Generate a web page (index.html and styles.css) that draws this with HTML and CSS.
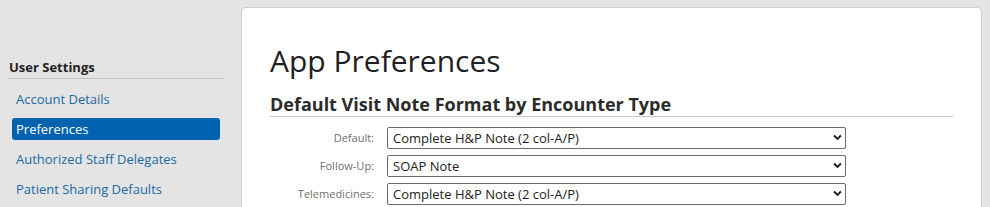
FILE: index.html
```html
<!DOCTYPE html>
<html lang="en">
<head>
    <meta charset="UTF-8">
    <title>App Preferences</title>
    <link rel="stylesheet" href="styles.css">
</head>
<body>
    <div class="layout">
        <aside class="sidebar">
            <h4 class="side-title">User Settings</h4>
            <nav class="side-nav">
                <a href="#" class="side-link">Account Details</a>
                <a href="#" class="side-link active">Preferences</a>
                <a href="#" class="side-link">Authorized Staff Delegates</a>
                <a href="#" class="side-link">Patient Sharing Defaults</a>
            </nav>
        </aside>

        <main class="panel">
            <h1 class="page-title">App Preferences</h1>
            <h2 class="section-title">Default Visit Note Format by Encounter Type</h2>

            <div class="form-row">
                <label for="fmtDefault">Default:</label>
                <div class="select-wrap">
                    <select id="fmtDefault">
                        <option>Complete H&amp;P Note (2 col-A/P)</option>
                        <option>SOAP Note</option>
                    </select>
                    <svg class="chevron" viewBox="0 0 10 7" width="9" height="7"><path d="M1.2 1.2 L5 5 L8.8 1.2" fill="none" stroke="#222" stroke-width="2.2"/></svg>
                </div>
            </div>

            <div class="form-row">
                <label for="fmtFollow">Follow-Up:</label>
                <div class="select-wrap">
                    <select id="fmtFollow">
                        <option>SOAP Note</option>
                        <option>Complete H&amp;P Note (2 col-A/P)</option>
                    </select>
                    <svg class="chevron" viewBox="0 0 10 7" width="9" height="7"><path d="M1.2 1.2 L5 5 L8.8 1.2" fill="none" stroke="#222" stroke-width="2.2"/></svg>
                </div>
            </div>

            <div class="form-row">
                <label for="fmtTele">Telemedicines:</label>
                <div class="select-wrap">
                    <select id="fmtTele">
                        <option>Complete H&amp;P Note (2 col-A/P)</option>
                        <option>SOAP Note</option>
                    </select>
                    <svg class="chevron" viewBox="0 0 10 7" width="9" height="7"><path d="M1.2 1.2 L5 5 L8.8 1.2" fill="none" stroke="#222" stroke-width="2.2"/></svg>
                </div>
            </div>
        </main>
    </div>
</body>
</html>
```

FILE: styles.css
```css
* {
    margin: 0;
    padding: 0;
    box-sizing: border-box;
    font-family: 'Open Sans', 'Noto Sans', sans-serif;
}

html, body {
    height: 207px;
    overflow: hidden;
}

body {
    background: #e4e4e4;
}

.layout {
    display: flex;
    padding: 7px 8px 0 8px;
}

.sidebar {
    width: 216px;
    flex-shrink: 0;
    margin-right: 17px;
    padding-top: 51px;
}

.side-title {
    font-size: 13px;
    font-weight: 700;
    color: #222;
    line-height: 18px;
    padding: 0 0 2px 1px;
    border-bottom: 1px solid #c4c4c4;
    margin-bottom: 9px;
}

.side-nav {
    display: flex;
    flex-direction: column;
    gap: 8px;
    padding: 0 4px;
}

.side-link {
    display: block;
    height: 22px;
    line-height: 22px;
    padding-left: 4px;
    font-size: 13px;
    color: #1b6aa5;
    text-decoration: none;
    border-radius: 3px;
}

.side-link.active {
    background: #0063b0;
    color: white;
}

.panel {
    flex: 1;
    height: 220px;
    background: white;
    border: 1px solid #d0d0d0;
    border-radius: 5px;
    padding: 33px 28px 0 28px;
}

.page-title {
    font-size: 30px;
    font-weight: 400;
    color: #1e2124;
    line-height: 40px;
    margin-bottom: 13px;
}

.section-title {
    font-size: 18px;
    font-weight: 700;
    color: #2b2b2b;
    line-height: 20px;
    padding-bottom: 2px;
    border-bottom: 1px solid #c8c8c8;
    margin-bottom: 9px;
}

.form-row {
    display: flex;
    align-items: center;
    margin-bottom: 5px;
}

.form-row label {
    width: 104px;
    text-align: right;
    font-size: 11px;
    color: #6f6f6f;
    margin-right: 13px;
}

.select-wrap {
    position: relative;
    width: 459px;
}

.select-wrap select {
    appearance: none;
    width: 100%;
    height: 22px;
    border: 1px solid #6a6a6a;
    border-radius: 2px;
    background: white;
    font-size: 13px;
    color: #222;
    padding: 0 20px 0 5px;
    outline: none;
}

.chevron {
    position: absolute;
    right: 4px;
    top: 8px;
    pointer-events: none;
}
```
